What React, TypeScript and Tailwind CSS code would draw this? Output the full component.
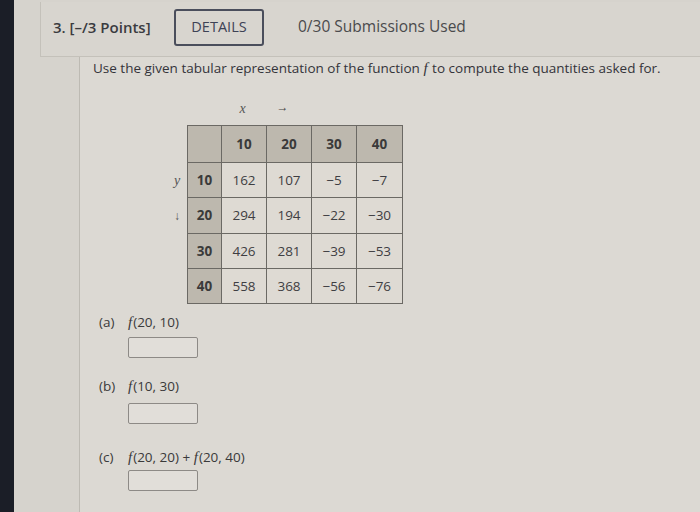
import React from "react";

const font = { fontFamily: '"Open Sans", "Noto Sans", sans-serif' };

const cols = [33, 45, 45, 45, 46];
const header = ["", "10", "20", "30", "40"];
const rows = [
  ["10", "162", "107", "\u22125", "\u22127"],
  ["20", "294", "194", "\u221222", "\u221230"],
  ["30", "426", "281", "\u221239", "\u221253"],
  ["40", "558", "368", "\u221256", "\u221276"],
];
const rowH = [36, 35, 36, 35, 35];

const F = () => (
  <i style={{ fontFamily: '"Liberation Serif", serif' }} className="text-[15px] pr-[1px]">
    f
  </i>
);

function Part({
  label,
  children,
  mt,
  boxMt,
}: {
  label: string;
  children: React.ReactNode;
  mt: string;
  boxMt: string;
}) {
  return (
    <div className={`flex flex-col ${mt}`}>
      <div className="flex items-center h-[20px] text-[13.5px] text-[#3a3a3a]">
        <span className="w-[29px]">{label}</span>
        <span>{children}</span>
      </div>
      <div className={`ml-[29px] ${boxMt} w-[70px] h-[21px] border-[1.5px] border-[#8d8a86] rounded-[2px] bg-[#e1ded9]`} />
    </div>
  );
}

export default function App() {
  return (
    <div className="w-[700px] h-[512px] flex bg-[#d6d3cd] overflow-hidden" style={font}>
      <div className="w-[14px] h-full bg-[#1b1e27]" />
      <div className="flex-1 flex flex-col">
        <div className="h-[2px]" />
        <div className="ml-[26px] h-[55px] flex items-center pl-[12px] pb-[4px] bg-[#d8d5cf] border-l border-b border-[#c4c1ba]">
          <span className="text-[15px] font-semibold text-[#3a3b40] w-[121px]">3. [&#8211;/3 Points]</span>
          <div className="w-[90px] h-[37px] border-2 border-[#4a4e5c] rounded-[3px] flex items-center justify-center text-[14.5px] font-medium text-[#3d4255]">
            DETAILS
          </div>
          <span className="ml-[34px] text-[15.5px] text-[#4a4a4c]">0/30 Submissions Used</span>
        </div>
        <div className="flex flex-1">
          <div className="w-[65px]" />
          <div className="flex-1 bg-[#dcd9d3] border-l border-[#bdbab3] flex flex-col">
            <p className="pl-[13px] pt-[1px] h-[20px] leading-[20px] text-[13.5px] text-[#34343a]">
              Use the given tabular representation of the function <F /> to compute the quantities asked for.
            </p>
            <div className="flex pl-[87px] mt-[23px]">
              <div className="w-[20px] flex flex-col text-[#555] text-[13px]">
                <div className="h-[63px]" />
                <div className="h-[35px] flex items-center justify-center">
                  <i style={{ fontFamily: '"Liberation Serif", serif' }} className="text-[14px]">
                    y
                  </i>
                </div>
                <div className="h-[36px] flex items-center justify-center text-[12px]">&#8595;</div>
              </div>
              <div className="flex flex-col">
                <div className="flex h-[16px] items-center text-[#555]">
                  <div style={{ width: cols[0] }} />
                  <div style={{ width: cols[1] }} className="flex justify-center">
                    <i style={{ fontFamily: '"Liberation Serif", serif' }} className="text-[14px]">
                      x
                    </i>
                  </div>
                  <div style={{ width: cols[2] }} className="flex justify-center text-[12px] text-[#444] -ml-[5px] -mt-[3px]">
                    &#8594;
                  </div>
                </div>
                <div className="mt-[9px] border border-[#6b6964]">
                  {[header, ...rows].map((r, ri) => (
                    <div
                      key={ri}
                      className={`flex ${ri > 0 ? "border-t border-[#6b6964]" : ""}`}
                      style={{ height: rowH[ri] }}
                    >
                      {r.map((c, ci) => {
                        const dark = ri === 0 || ci === 0;
                        return (
                          <div
                            key={ci}
                            style={{ width: cols[ci] }}
                            className={`flex items-center justify-center text-[13.5px] ${ci > 0 ? "border-l border-[#6b6964]" : ""} ${dark ? "bg-[#bdb8ae] font-bold text-[#3a3a3a]" : "bg-[#dedad3] text-[#3e3e42]"}`}
                          >
                            {c}
                          </div>
                        );
                      })}
                    </div>
                  ))}
                </div>
              </div>
            </div>
            <div className="pl-[19px] flex flex-col">
              <Part label="(a)" mt="mt-[8px]" boxMt="mt-[5px]">
                <F />
                (20, 10)
              </Part>
              <Part label="(b)" mt="mt-[18px]" boxMt="mt-[7px]">
                <F />
                (10, 30)
              </Part>
              <Part label="(c)" mt="mt-[23px]" boxMt="mt-[3px]">
                <F />
                (20, 20) + <F />
                (20, 40)
              </Part>
            </div>
          </div>
        </div>
      </div>
    </div>
  );
}
